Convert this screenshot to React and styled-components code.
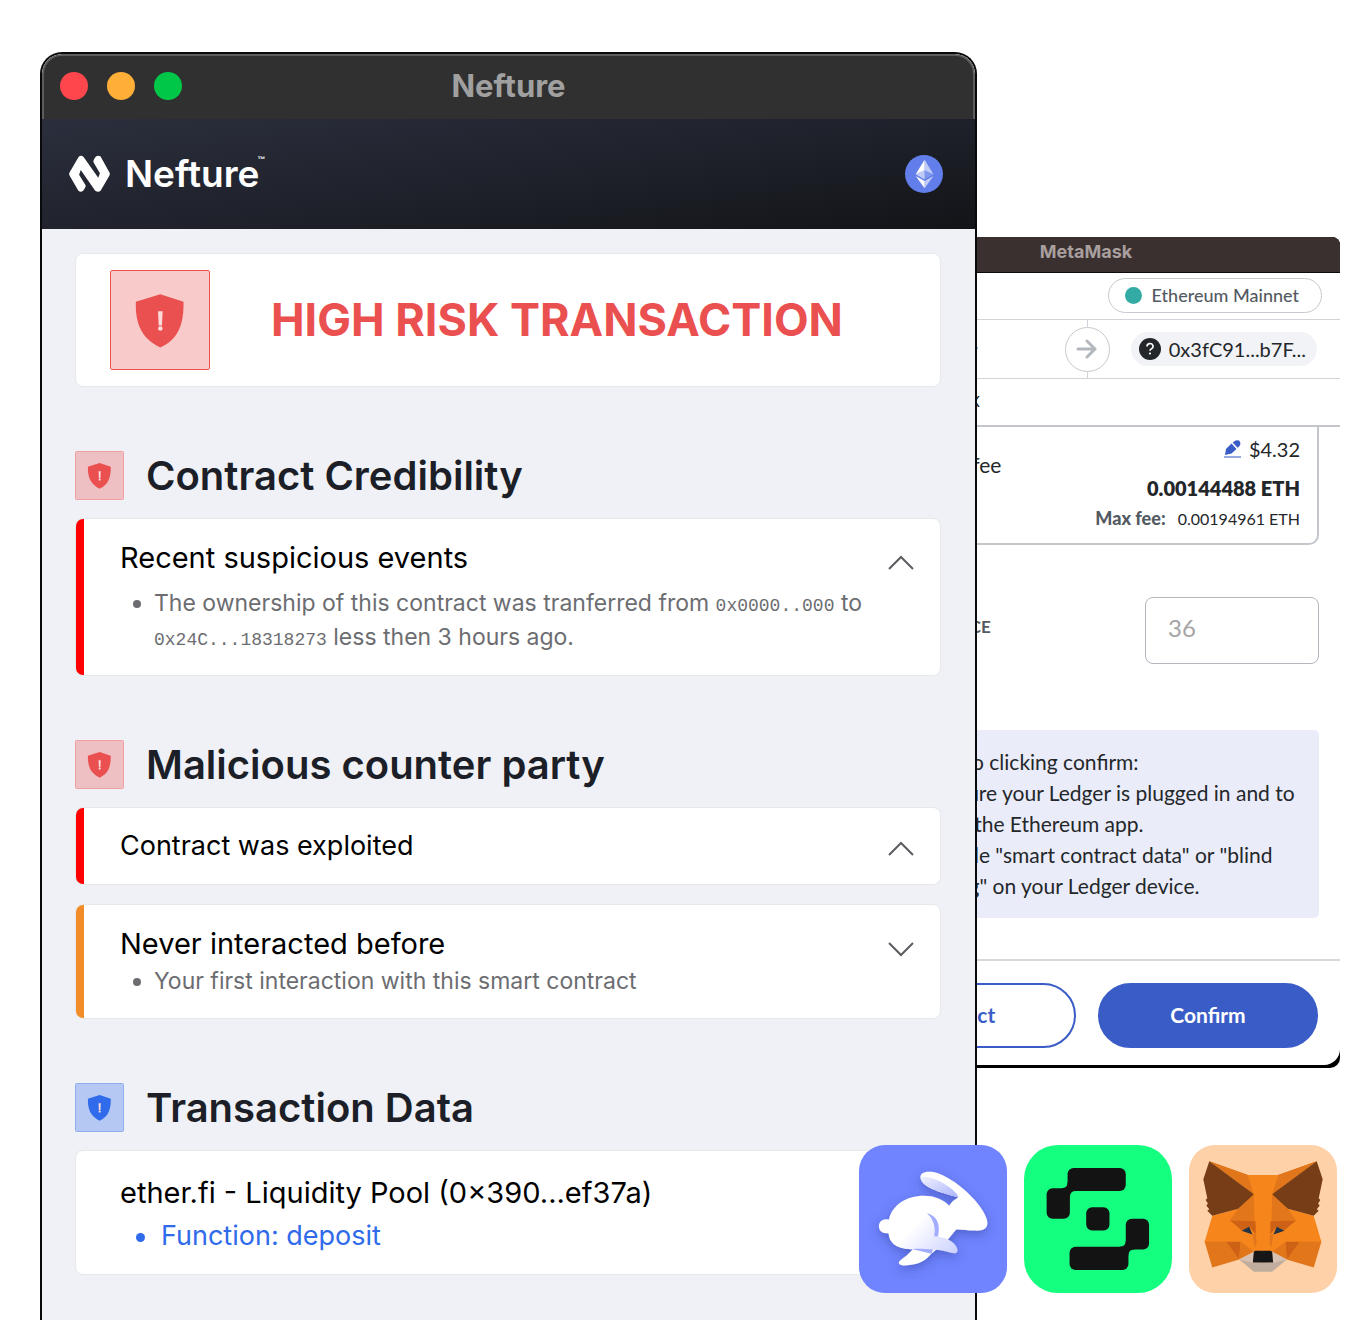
import React, { useState } from "react";
import styled, { createGlobalStyle, css } from "styled-components";

const GlobalStyle = createGlobalStyle`
  *, *::before, *::after { box-sizing: border-box; }
  body { margin: 0; background: #fff; font-family: Inter, "Liberation Sans", sans-serif; overflow-x: hidden; }
  h1, h2, h3, p, ul { margin: 0; padding: 0; font-weight: inherit; }
  button, input { font-family: inherit; }
  svg { display: block; }
`;

const Stage = styled.main`
  display: grid;
  grid-template-columns: 72fr 28fr;
  min-height: 100vh;
  padding: 52px 14px 0 40px;
`;

/* Nefture window */

const NeftureWindow = styled.section`
  position: relative;
  z-index: 1;
  display: flex;
  flex-direction: column;
  margin-right: -1px;
  border: 2px solid #08090b;
  border-bottom: 0;
  border-radius: 22px 22px 0 0;
  background: #f0f1f6;
  overflow: hidden;
`;

const NeftureTitleBar = styled.div`
  display: grid;
  grid-template-columns: 1fr auto 1fr;
  align-items: center;
  height: 65px;
  padding: 0 16px 3px;
  background: #303030;
  border: 2px solid #5c5c5c;
  border-width: 2px 2px 0;
  border-radius: 20px 20px 0 0;
`;

const TrafficLights = styled.div`
  display: flex;
  gap: 19px;
`;

const Light = styled.span`
  width: 28px;
  height: 28px;
  border-radius: 50%;
  background: ${(p) => p.$color};
`;

const NeftureTitle = styled.h1`
  color: #a0a0a0;
  font-size: 31px;
  line-height: 36px;
  font-weight: 700;
`;

const BrandHeader = styled.header`
  display: flex;
  align-items: center;
  justify-content: space-between;
  height: 110px;
  padding: 0 32px 0 27px;
  background: linear-gradient(172deg, #2b2f3d 0%, #1f222b 52%, #131418 100%);
`;

const Brand = styled.a`
  display: flex;
  align-items: center;
  gap: 15px;
  color: #fff;
  font-size: 37px;
  line-height: 40px;
  font-weight: 600;
  text-decoration: none;
`;

const Trademark = styled.sup`
  align-self: flex-start;
  margin-left: -17px;
  font-family: "Liberation Sans", sans-serif;
  font-size: 8px;
  line-height: 12px;
  font-weight: 700;
`;

const NeftureBody = styled.div`
  display: flex;
  flex-direction: column;
  gap: 64px;
  padding: 24px 34px 46px 33px;
`;

const Banner = styled.div`
  display: flex;
  align-items: center;
  gap: 61px;
  padding: 16px 34px;
  border: 1px solid #e6e8ea;
  border-radius: 8px;
  background: #fff;
  color: #eb5050;
  font-size: 45px;
  line-height: 56px;
  font-weight: 700;
`;

const tones = {
  danger: { main: "#eb5050", fill: "rgba(235, 80, 80, 0.3)", line: "rgba(235, 80, 80, 0.5)" },
  info: { main: "#2f6bea", fill: "rgba(47, 107, 234, 0.3)", line: "rgba(47, 107, 234, 0.5)" },
};

const ShieldBox = styled.span`
  flex: none;
  width: ${(p) => (p.$large ? 100 : 49)}px;
  height: ${(p) => (p.$large ? 100 : 49)}px;
  border: 1px solid ${(p) => (p.$large ? tones[p.$tone].main : tones[p.$tone].line)};
  border-radius: 2px;
  background: ${(p) => tones[p.$tone].fill};
  background-clip: padding-box;

  svg { width: 100%; height: 100%; }
`;

const Section = styled.section`
  display: flex;
  flex-direction: column;
  gap: 18px;
`;

const SectionHead = styled.div`
  display: flex;
  align-items: center;
  gap: 22px;
  height: 49px;
`;

const SectionTitle = styled.h2`
  color: #1c1f27;
  font-size: 40px;
  line-height: 48px;
  font-weight: 600;
`;

const CardStack = styled.div`
  display: flex;
  flex-direction: column;
  gap: 19px;
`;

const Card = styled.article`
  position: relative;
  display: flex;
  justify-content: space-between;
  align-items: ${(p) => (p.$tall ? "flex-start" : "center")};
  padding: ${(p) => p.$pad || "18px"} 22px ${(p) => p.$padBottom || "18px"} 44px;
  border: 1px solid #e6e8ea;
  border-radius: 8px;
  background: #fff;
  overflow: hidden;

  ${(p) =>
    p.$accent &&
    css`
      &::before {
        content: "";
        position: absolute;
        inset: 0 auto 0 0;
        width: 8px;
        background: ${p.$accent};
      }
    `}
`;

const CardText = styled.div`
  flex: 1;
`;

const CardTitle = styled.h3`
  color: #000;
  font-size: ${(p) => (p.$compact ? "27px" : "29px")};
  line-height: 36px;
  font-weight: 400;
`;

const Notes = styled.ul`
  list-style: none;
  margin-top: ${(p) => p.$gap || "0"};
  color: ${(p) => (p.$link ? "#2f6bea" : "#6c6d71")};
  font-size: ${(p) => (p.$link ? "27px" : "23px")};
  line-height: 34px;
`;

const Note = styled.li`
  display: flex;
  gap: ${(p) => (p.$wide ? "16px" : "13px")};
  padding-left: ${(p) => (p.$wide ? "16px" : "13px")};

  &::before {
    content: "";
    flex: none;
    width: ${(p) => (p.$wide ? "9px" : "8px")};
    height: ${(p) => (p.$wide ? "9px" : "8px")};
    margin-top: 14px;
    border-radius: 50%;
    background: currentColor;
  }
`;

const Hash = styled.code`
  font-family: "Liberation Mono", monospace;
  font-size: 18px;
  line-height: 18px;
`;

const PlainLink = styled.a`
  color: inherit;
  text-decoration: none;
`;

const Toggle = styled.button`
  flex: none;
  display: grid;
  place-items: center;
  width: 34px;
  height: 34px;
  margin-top: 6px;
  padding: 0;
  border: 0;
  background: none;
  color: #5b5c60;
  cursor: pointer;
`;

/* MetaMask window */

const SideColumn = styled.div`
  display: flex;
  flex-direction: column;
  align-items: flex-end;
  gap: 77px;
  min-width: 0;
  padding-top: 185px;
`;

const MaskWindow = styled.section`
  width: calc(100% + 144px);
  padding-bottom: 3px;
  border-radius: 8px 8px 10px 10px;
  background: #000;
  overflow: hidden;
  font-family: Lato, "Liberation Sans", sans-serif;
  color: #24272a;
`;

const MaskTitle = styled.h2`
  height: 36px;
  border-bottom: 1px solid #0c0a0a;
  background: #3a302f;
  color: #a89f9e;
  font-family: Inter, "Liberation Sans", sans-serif;
  font-size: 18px;
  line-height: 30px;
  font-weight: 700;
  text-align: center;
`;

const MaskBody = styled.div`
  border-radius: 0 0 16px 16px;
  background: #fff;
`;

const NetworkRow = styled.div`
  display: flex;
  justify-content: flex-end;
  align-items: center;
  height: 47px;
  padding: 0 18px 2px 0;
  border-bottom: 1px solid #d0d3d7;
`;

const NetworkPill = styled.button`
  display: flex;
  align-items: center;
  gap: 10px;
  height: 35px;
  padding: 0 22px 0 16px;
  border: 1px solid #c6cace;
  border-radius: 18px;
  background: #fff;
  color: #535a61;
  font-size: 18px;
  font-weight: 500;
`;

const Dot = styled.span`
  width: 17px;
  height: 17px;
  border-radius: 50%;
  background: #33aba4;
`;

const AccountRow = styled.div`
  display: grid;
  grid-template-columns: 1fr 45px 1fr;
  align-items: center;
  height: 59px;
  padding-left: 2px;
  border-bottom: 1px solid #d0d3d7;
`;

const Account = styled.div`
  margin-right: 87px;
  font-size: 20px;
  line-height: 32px;
  text-align: right;
`;

const AccountPill = styled.button`
  justify-self: end;
  display: flex;
  align-items: center;
  gap: 8px;
  height: 34px;
  margin-right: 23px;
  padding: 0 11px 0 8px;
  border: 0;
  border-radius: 17px;
  background: #f2f3f6;
  color: #24272a;
  font-size: 20px;
`;

const ArrowLine = styled.div`
  display: flex;
  flex-direction: column;
  align-items: center;
  height: 100%;

  &::before, &::after { content: ""; flex: 1; width: 1px; background: #d0d3d7; }
`;

const ArrowRing = styled.span`
  display: grid;
  place-items: center;
  width: 45px;
  height: 45px;
  border: 1px solid #c6cace;
  border-radius: 50%;
`;

const Tabs = styled.nav`
  height: 48px;
  padding-left: 116px;
  border-bottom: 2px solid #c3c7cc;
`;

const Tab = styled.a`
  color: #24272a;
  font-size: 16px;
  line-height: 44px;
  text-decoration: none;
`;

const Content = styled.div`
  padding: 0 21px 41px;
`;

const FeeCard = styled.div`
  display: flex;
  justify-content: space-between;
  padding: 6px 17px 10px 20px;
  border: 2px solid #c3c7cc;
  border-top: 0;
  border-radius: 0 0 10px 10px;
`;

const FeeLabel = styled.p`
  margin-top: 16px;
  font-size: 21px;
  line-height: 32px;
`;

const FeeValues = styled.div`
  text-align: right;
  font-size: 20px;
  line-height: 32px;
`;

const FeeEdit = styled.p`
  display: flex;
  justify-content: flex-end;
  align-items: center;
  gap: 7px;
`;

const EditButton = styled.button`
  padding: 0;
  border: 0;
  background: none;
  cursor: pointer;
`;

const FeeTotal = styled.p`
  margin-top: 7px;
  font-weight: 800;
`;

const MaxFee = styled.p`
  font-size: 16px;
  line-height: 28px;

  b { margin-right: 8px; color: #535a61; font-size: 18px; font-weight: 900; }
`;

const NonceRow = styled.div`
  display: flex;
  justify-content: space-between;
  align-items: center;
  margin-top: 52px;
  color: #535a61;
  font-size: 17px;
  font-weight: 700;

  label { padding-bottom: 8px; }
`;

const NonceInput = styled.input`
  width: 174px;
  height: 67px;
  padding: 0 22px 6px;
  border: 1px solid #b3b8be;
  border-radius: 8px;
  background: #fff;
  color: #a5a5a5;
  font-size: 24px;
`;

const LedgerInfo = styled.div`
  margin-top: 66px;
  padding: 16px 16px 17px 62px;
  border-radius: 5px;
  background: #eaedf9;
  font-size: 21px;
  line-height: 31px;

  p { white-space: nowrap; }
`;

const Actions = styled.footer`
  display: grid;
  grid-template-columns: 1fr 1fr;
  gap: 22px;
  padding: 22px 22px 17px 24px;
  border-top: 2px solid #d6d9dc;
`;

const ActionButton = styled.button`
  height: 65px;
  padding-bottom: 4px;
  border: 2px solid #3a5cc7;
  border-radius: 33px;
  background: ${(p) => (p.$primary ? "#3a5cc7" : "#fff")};
  color: ${(p) => (p.$primary ? "#fff" : "#3a5cc7")};
  font-size: 21px;
  font-weight: 700;
  cursor: pointer;
`;

/* Wallet logos */

const Wallets = styled.div`
  position: relative;
  z-index: 2;
  display: flex;
  gap: 17px;
  margin-right: 3px;
`;

const WalletTile = styled.span`
  flex: none;
  width: 148px;
  height: 148px;
  border-radius: ${(p) => p.$radius};
  background: ${(p) => p.$color};
  overflow: hidden;
`;

function Shield({ tone, large }) {
  return (
    <ShieldBox $tone={tone} $large={large}>
      <svg viewBox="0 0 300 300" aria-hidden="true">
        <path
          d="M151 71 222 94C223 160 208 208 151 234C92 206 74 160 76 94Z"
          fill={tones[tone].main}
        />
        <path d="M144 123h14l-2 44h-10z" fill="#fbdada" />
        <circle cx="151" cy="176" r="7" fill="#fbdada" />
      </svg>
    </ShieldBox>
  );
}

function Chevron({ up }) {
  return (
    <svg width="28" height="16" viewBox="0 0 28 16" aria-hidden="true">
      <path d={up ? "M2 14 14 2l12 12" : "M2 2l12 12L26 2"} fill="none" stroke="currentColor" strokeWidth="2" />
    </svg>
  );
}

function RiskCard({ title, accent, pad, padBottom, open = false, children }) {
  const [up, setUp] = useState(open);
  return (
    <Card $accent={accent} $pad={pad} $padBottom={padBottom} $tall={Boolean(children)}>
      <CardText>
        <CardTitle $compact={!children}>{title}</CardTitle>
        {children}
      </CardText>
      <Toggle aria-label={`Toggle ${title}`} aria-expanded={up} onClick={() => setUp(!up)}>
        <Chevron up={up} />
      </Toggle>
    </Card>
  );
}

function NeftureMark() {
  return (
    <svg width="41" height="38" viewBox="116 344 122 112" aria-hidden="true">
      <path
        fill="#fff"
        d="M144 350Q151 342 160 350L203 411 208 398 190 367Q187 361 191 355L196 348Q203 343 210 348L236 395Q239 400 236 405L210 450Q203 456 194 450L151 388 146 402 164 431Q167 436 164 441L158 450Q151 456 144 450L118 405Q115 400 118 395Z"
      />
    </svg>
  );
}

function EthereumIcon() {
  return (
    <svg width="38" height="38" viewBox="0 0 32 32" role="img" aria-label="Ethereum">
      <circle cx="16" cy="16" r="16" fill="#627eea" />
      <g fill="#fff">
        <path fillOpacity=".6" d="M16.498 4v8.87l7.497 3.35z" />
        <path d="M16.498 4 9 16.22l7.498-3.35z" />
        <path fillOpacity=".6" d="M16.498 21.968v6.027L24 17.616z" />
        <path d="M16.498 27.995v-6.028L9 17.616z" />
        <path fillOpacity=".2" d="m16.498 20.573 7.497-4.353-7.497-3.348z" />
        <path fillOpacity=".6" d="m9 16.22 7.498 4.353v-7.701z" />
      </g>
    </svg>
  );
}

function RainbowLogo() {
  return (
    <svg width="148" height="148" viewBox="24 45 446 446" role="img" aria-label="Rabbit wallet">
      <defs>
        <linearGradient id="rabbit-body" gradientUnits="userSpaceOnUse" x1="150" y1="210" x2="320" y2="380">
          <stop offset="0.35" stopColor="#fff" />
          <stop offset="1" stopColor="#c9cfff" />
        </linearGradient>
        <linearGradient id="rabbit-ear" x1="0" y1="0" x2="1" y2="1">
          <stop offset="0" stopColor="#f1f2ff" />
          <stop offset="1" stopColor="#aab3fb" />
        </linearGradient>
        <filter id="rabbit-shadow" x="-30%" y="-30%" width="160%" height="170%">
          <feDropShadow dx="0" dy="12" stdDeviation="16" floodColor="#2f3f9c" floodOpacity="0.5" />
        </filter>
      </defs>
      <g filter="url(#rabbit-shadow)">
        <path
          fill="#fff"
          d="M210 146C204 128 230 120 262 130C330 154 411 240 411 280C410 300 396 304 372 303C350 303 334 299 317 300L292 330L242 373C228 390 205 408 162 408C146 408 139 402 148 393C160 384 175 372 186 359C150 358 116 350 113 310C96 314 84 304 84 290C84 276 96 266 114 270C124 226 166 198 220 198C250 198 276 208 296 228Q305 212 323 203C280 190 216 176 210 146Z"
        />
        <path fill="url(#rabbit-ear)" d="M209 142C212 174 276 188 323 203C324 186 250 132 209 142Z" />
        <path fill="#a3adff" d="M228 251C262 258 270 290 262 322L242 373L186 359L250 320C256 296 248 268 228 251Z" />
        <path
          fill="url(#rabbit-body)"
          d="M113 310C110 240 170 205 228 251C250 270 256 296 248 320C285 320 320 340 321 362C321 373 310 373 298 369C260 358 220 359 186 358C145 357 118 345 113 310Z"
        />
      </g>
    </svg>
  );
}

function SafeLogo() {
  return (
    <svg width="148" height="148" viewBox="26 45 445 445" role="img" aria-label="Safe">
      <g fill="#121312">
        <rect x="157" y="114" width="175" height="69" rx="18" />
        <rect x="94" y="175" width="70" height="92" rx="18" />
        <path d="M139 175Q157 175 157 157L182 183Q164 183 164 201Z" />
        <rect x="213" y="232" width="70" height="70" rx="18" />
        <rect x="163" y="351" width="177" height="70" rx="18" />
        <rect x="332" y="267" width="70" height="92" rx="18" />
        <path d="M314 351Q332 351 332 333L358 359Q340 359 340 377Z" />
      </g>
    </svg>
  );
}

function FoxHalf() {
  return (
    <>
      <path fill="#f6851b" d="M97 258 180 235 204 135H250V366H222L178 388 74 336Z" />
      <path fill="#e2761b" d="M88 94 204 135 222 193Z" />
      <path fill="#e2761b" d="M204 135 222 193 227 274 150 272 175 237 222 193 88 94Z" />
      <path fill="#763d16" d="M88 94 222 193 175 237 97 258 82 243 88 238 79 227 84 221 77 210 82 205 70 148Z" />
      <path fill="#f6851b" d="M204 135H250V366H225L222 193Z" />
      <path fill="#cd6116" d="M150 272 227 274 228 314 210 292 185 302Z" />
      <path fill="#f6851b" d="M150 272 185 302 182 336Z" />
      <path fill="#e2761b" d="M222 193 230 340 225 355 218 313 228 314Z" />
      <path fill="#233447" d="M185 303 208 291 218 314Z" />
      <path fill="#e2761b" d="M74 336H139L178 389 97 413Z" />
      <path fill="#cd6116" d="M139 336H182L178 389Z" />
      <path fill="#e2761b" d="M182 336 222 366 178 389Z" />
      <path fill="#d7c1b3" d="M178 389 226 364 220 408Z" />
      <path fill="#c0ad9e" d="M178 389 220 400 250 396V426H222Z" />
      <path fill="#161616" d="M226 363H250V398H219L222 366Z" />
    </>
  );
}

function FoxLogo() {
  return (
    <svg width="148" height="148" viewBox="27 45 445 445" role="img" aria-label="MetaMask">
      <FoxHalf />
      <g transform="translate(499 0) scale(-1 1)">
        <FoxHalf />
      </g>
    </svg>
  );
}

function ArrowIcon() {
  return (
    <svg width="22" height="20" viewBox="0 0 22 20" aria-hidden="true">
      <path d="M2 10h17M11 2l8 8-8 8" fill="none" stroke="#b3b8be" strokeWidth="3" strokeLinecap="round" strokeLinejoin="round" />
    </svg>
  );
}

function UnknownIcon() {
  return (
    <svg width="22" height="22" viewBox="0 0 22 22" aria-hidden="true">
      <circle cx="11" cy="11" r="11" fill="#24272a" />
      <path d="M8 8.500a3 2.800 0 1 1 4.500 2.300q-1.500.8-1.500 2" fill="none" stroke="#fff" strokeWidth="1.600" />
      <circle cx="11" cy="15.500" r="1.100" fill="#fff" />
    </svg>
  );
}

function EditIcon() {
  return (
    <svg width="18" height="20" viewBox="0 0 18 20" aria-hidden="true">
      <path d="M1 16 2 10 7.500 4.500 12.500 10 7.500 14.500Z" fill="#3a5cc7" />
      <path d="M8.700 3.500Q12 .2 15 1.500 17.500 4 15.500 7L13.600 8.800Z" fill="#3a5cc7" />
      <path d="M0 17h17v2H0z" fill="#95a9e3" />
    </svg>
  );
}

export default function App() {
  return (
    <>
      <GlobalStyle />
      <Stage>
        <NeftureWindow>
          <NeftureTitleBar>
            <TrafficLights>
              <Light $color="#ff464c" />
              <Light $color="#ffae38" />
              <Light $color="#00c748" />
            </TrafficLights>
            <NeftureTitle>Nefture</NeftureTitle>
          </NeftureTitleBar>
          <BrandHeader>
            <Brand href="#home">
              <NeftureMark />
              Nefture
              <Trademark>™</Trademark>
            </Brand>
            <EthereumIcon />
          </BrandHeader>
          <NeftureBody>
            <Banner role="alert">
              <Shield tone="danger" large />
              HIGH RISK TRANSACTION
            </Banner>

            <Section>
              <SectionHead>
                <Shield tone="danger" />
                <SectionTitle>Contract Credibility</SectionTitle>
              </SectionHead>
              <RiskCard title="Recent suspicious events" accent="#ff0000" pad="21px" padBottom="21px" open>
                <Notes $gap="10px">
                  <Note>
                    <span>
                      The ownership of this contract was tranferred from <Hash>0x0000..000</Hash> to
                      <br />
                      <Hash>0x24C...18318273</Hash> less then 3 hours ago.
                    </span>
                  </Note>
                </Notes>
              </RiskCard>
            </Section>

            <Section>
              <SectionHead>
                <Shield tone="danger" />
                <SectionTitle>Malicious counter party</SectionTitle>
              </SectionHead>
              <CardStack>
                <RiskCard title="Contract was exploited" accent="#ff0000" open />
                <RiskCard title="Never interacted before" accent="#f28c28" pad="21px" padBottom="20px">
                  <Notes $gap="2px">
                    <Note>
                      <span>Your first interaction with this smart contract</span>
                    </Note>
                  </Notes>
                </RiskCard>
              </CardStack>
            </Section>

            <Section>
              <SectionHead>
                <Shield tone="info" />
                <SectionTitle>Transaction Data</SectionTitle>
              </SectionHead>
              <Card $tall $pad="24px" $padBottom="21px">
                <CardText>
                  <CardTitle>ether.fi - Liquidity Pool (0×390...ef37a)</CardTitle>
                  <Notes $gap="8px" $link>
                    <Note $wide>
                      <PlainLink href="#deposit">Function: deposit</PlainLink>
                    </Note>
                  </Notes>
                </CardText>
              </Card>
            </Section>
          </NeftureBody>
        </NeftureWindow>

        <SideColumn>
          <MaskWindow>
            <MaskTitle>MetaMask</MaskTitle>
            <MaskBody>
              <NetworkRow>
                <NetworkPill>
                  <Dot />
                  Ethereum Mainnet
                </NetworkPill>
              </NetworkRow>
              <AccountRow>
                <Account>Ledger</Account>
                <ArrowLine>
                  <ArrowRing>
                    <ArrowIcon />
                  </ArrowRing>
                </ArrowLine>
                <AccountPill>
                  <UnknownIcon />
                  0x3fC91...b7F...
                </AccountPill>
              </AccountRow>
              <Tabs>
                <Tab href="#hex">HEX</Tab>
              </Tabs>
              <Content>
                <FeeCard>
                  <FeeLabel>Estimated fee</FeeLabel>
                  <FeeValues>
                    <FeeEdit>
                      <EditButton aria-label="Edit fee">
                        <EditIcon />
                      </EditButton>
                      $4.32
                    </FeeEdit>
                    <FeeTotal>0.00144488 ETH</FeeTotal>
                    <MaxFee>
                      <b>Max fee:</b> 0.00194961 ETH
                    </MaxFee>
                  </FeeValues>
                </FeeCard>
                <NonceRow>
                  <label htmlFor="nonce">CUSTOM NONCE</label>
                  <NonceInput id="nonce" defaultValue="36" />
                </NonceRow>
                <LedgerInfo>
                  <p>Prior to clicking confirm:</p>
                  <p>- Be sure your Ledger is plugged in and to</p>
                  <p>select the Ethereum app.</p>
                  <p>- Enable "smart contract data" or "blind</p>
                  <p>signing" on your Ledger device.</p>
                </LedgerInfo>
              </Content>
              <Actions>
                <ActionButton>Reject</ActionButton>
                <ActionButton $primary>Confirm</ActionButton>
              </Actions>
            </MaskBody>
          </MaskWindow>
          <Wallets>
            <WalletTile $color="#7084ff" $radius="26px">
              <RainbowLogo />
            </WalletTile>
            <WalletTile $color="#14ff80" $radius="34px">
              <SafeLogo />
            </WalletTile>
            <WalletTile $color="#ffd1a8" $radius="26px">
              <FoxLogo />
            </WalletTile>
          </Wallets>
        </SideColumn>
      </Stage>
    </>
  );
}
